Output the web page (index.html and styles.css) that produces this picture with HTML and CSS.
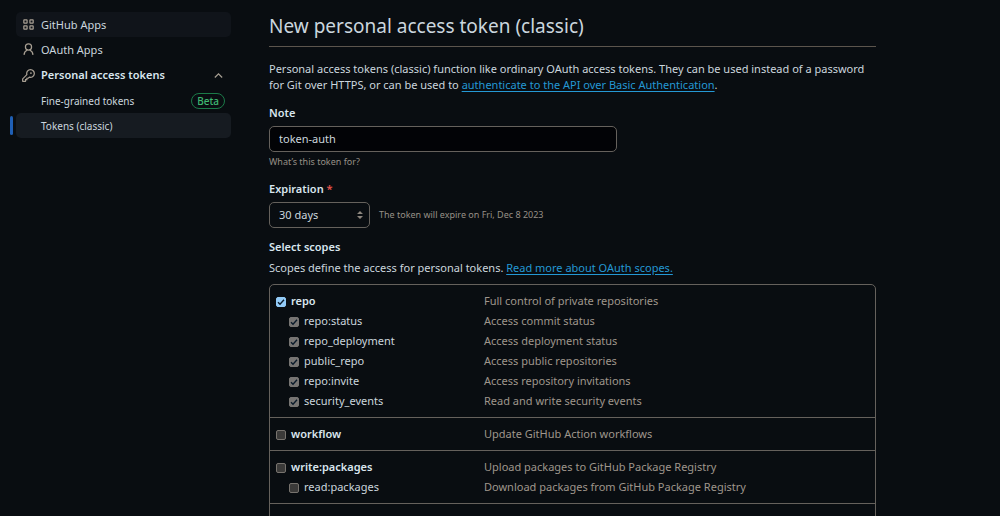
FILE: index.html
```html
<!DOCTYPE html>
<html lang="en">

<head>
    <meta charset="UTF-8">
    <meta name="viewport" content="width=device-width, initial-scale=1.0">
    <title>New personal access token (classic)</title>
    <link rel="stylesheet" href="styles.css">
</head>

<body>
    <div class="page">
        <nav class="sidebar" aria-label="Developer settings">
            <ul class="menu">
                <li>
                    <a class="menu-item hover" href="#">
                        <svg class="icon" viewBox="0 0 16 16"><rect x="2.25" y="2.25" width="4" height="4" rx=".5"/><rect x="9.75" y="2.25" width="4" height="4" rx=".5"/><rect x="2.25" y="9.75" width="4" height="4" rx=".5"/><rect x="9.75" y="9.75" width="4" height="4" rx=".5"/></svg>
                        GitHub Apps
                    </a>
                </li>
                <li>
                    <a class="menu-item" href="#">
                        <svg class="icon" viewBox="0 0 16 16"><circle cx="8" cy="5" r="3.8"/><path d="M2.5 14.6c.2-3 2-5 4-5.9M13.5 14.6c-.2-3-2-5-4-5.9"/></svg>
                        OAuth Apps
                    </a>
                </li>
                <li>
                    <button class="menu-item parent" type="button" aria-expanded="true">
                        <svg class="icon" viewBox="0 0 16 16"><path d="M10.5.8a4.7 4.7 0 1 1-1.4 9.2L7.7 11.4H6v1.8H4.4v1.6a.5.5 0 0 1-.5.5H1.3a.5.5 0 0 1-.5-.5v-2.6L6 6.9A4.7 4.7 0 0 1 10.5.8z"/><circle class="dot" cx="11" cy="5" r="1.1"/></svg>
                        Personal access tokens
                        <svg class="icon chevron" viewBox="0 0 16 16"><path d="M3.5 10.5L8 6l4.5 4.5"/></svg>
                    </button>
                    <ul class="submenu">
                        <li><a class="menu-item" href="#">Fine-grained tokens <span class="beta">Beta</span></a></li>
                        <li class="current"><a class="menu-item" href="#" aria-current="page">Tokens (classic)</a></li>
                    </ul>
                </li>
            </ul>
        </nav>

        <main class="content">
            <h1 class="title">New personal access token (classic)</h1>
            <p class="intro">Personal access tokens (classic) function like ordinary OAuth access tokens. They can be used instead of a password for Git over HTTPS, or can be used to <a href="#">authenticate to the API over Basic Authentication</a>.</p>

            <form>
                <div class="field">
                    <label class="field-label" for="note">Note</label>
                    <input class="text-input" id="note" type="text" value="token-auth" aria-describedby="note-hint">
                    <p class="hint" id="note-hint">What’s this token for?</p>
                </div>

                <div class="field">
                    <label class="field-label" for="expiration">Expiration <span class="required">*</span></label>
                    <div class="expiration">
                        <div class="select-wrap">
                            <select class="select" id="expiration">
                                <option>7 days</option>
                                <option selected>30 days</option>
                                <option>60 days</option>
                                <option>90 days</option>
                            </select>
                            <svg class="arrows" viewBox="0 0 6 8"><path d="M3 0l3 3H0zM3 8L0 5h6z"/></svg>
                        </div>
                        <span class="hint">The token will expire on Fri, Dec 8 2023</span>
                    </div>
                </div>

                <h2 class="field-label">Select scopes</h2>
                <p class="scopes-intro">Scopes define the access for personal tokens. <a href="#">Read more about OAuth scopes.</a></p>

                <div class="scopes">
                    <div class="group">
                        <div class="scope top">
                            <label><input type="checkbox" checked>repo</label>
                            <span class="desc">Full control of private repositories</span>
                        </div>
                        <div class="scope">
                            <label><input type="checkbox" checked disabled>repo:status</label>
                            <span class="desc">Access commit status</span>
                        </div>
                        <div class="scope">
                            <label><input type="checkbox" checked disabled>repo_deployment</label>
                            <span class="desc">Access deployment status</span>
                        </div>
                        <div class="scope">
                            <label><input type="checkbox" checked disabled>public_repo</label>
                            <span class="desc">Access public repositories</span>
                        </div>
                        <div class="scope">
                            <label><input type="checkbox" checked disabled>repo:invite</label>
                            <span class="desc">Access repository invitations</span>
                        </div>
                        <div class="scope">
                            <label><input type="checkbox" checked disabled>security_events</label>
                            <span class="desc">Read and write security events</span>
                        </div>
                    </div>
                    <div class="group">
                        <div class="scope top">
                            <label><input type="checkbox">workflow</label>
                            <span class="desc">Update GitHub Action workflows</span>
                        </div>
                    </div>
                    <div class="group">
                        <div class="scope top">
                            <label><input type="checkbox">write:packages</label>
                            <span class="desc">Upload packages to GitHub Package Registry</span>
                        </div>
                        <div class="scope">
                            <label><input type="checkbox">read:packages</label>
                            <span class="desc">Download packages from GitHub Package Registry</span>
                        </div>
                    </div>
                    <div class="group">
                        <div class="scope top">
                            <label><input type="checkbox">delete:packages</label>
                            <span class="desc">Delete packages from GitHub Package Registry</span>
                        </div>
                    </div>
                </div>
            </form>
        </main>
    </div>
</body>

</html>
```
FILE: styles.css
```css
* {
    box-sizing: border-box;
    padding: 0;
    margin: 0;
}

body {
    background: #090d11;
    color: #cbd6de;
    font: 11px/16px "Noto Sans", sans-serif;
}

input,
select,
button {
    font: inherit;
    color: inherit;
}

ul {
    list-style: none;
}

a {
    color: #2498d4;
    text-underline-offset: 2px;
}

.page {
    display: flex;
    gap: 38px;
    padding: 12px 124px 0 16px;
}

/* sidebar */
.sidebar {
    flex: 0 0 215px;
}

.menu-item {
    display: flex;
    align-items: center;
    gap: 6px;
    width: 100%;
    height: 25px;
    padding: 0 6px;
    border: 0;
    border-radius: 5px;
    background: none;
    color: #cbd6de;
    text-decoration: none;
}

.menu-item.hover {
    background: #10141a;
}

.menu-item.parent {
    height: 26px;
    font-weight: 600;
    color: #d9e6ee;
}

.submenu .menu-item {
    padding-left: 25px;
    font-size: 10px;
}

.icon {
    width: 13px;
    height: 13px;
    fill: none;
    stroke: #a89f93;
    stroke-width: 1.5;
}

.icon .dot {
    fill: #a89f93;
    stroke: none;
}

.chevron {
    margin-left: auto;
}

.beta {
    margin-left: auto;
    padding: 0 5px;
    border: 1px solid #1b7a48;
    border-radius: 8px;
    line-height: 14px;
    font-weight: 500;
    color: #3fb871;
}

.current {
    position: relative;
}

.current .menu-item {
    background: #161b21;
}

.current::before {
    content: "";
    position: absolute;
    left: -6px;
    top: 3px;
    bottom: 3px;
    width: 3px;
    border-radius: 2px;
    background: #1f5fb5;
}

/* main column */
.content {
    flex: 1;
    min-width: 0;
}

.title {
    padding-bottom: 6px;
    border-bottom: 1px solid #5c554d;
    font-size: 19px;
    line-height: 28px;
    font-weight: 400;
}

.intro {
    margin: 14px 0 12px;
}

.field {
    margin-bottom: 11px;
}

.field-label {
    display: block;
    font-size: 11px;
    font-weight: 600;
    color: #d9e6ee;
}

.required {
    color: #e5534b;
}

.text-input,
.select {
    display: block;
    width: 100%;
    height: 26px;
    padding: 0 9px 1px;
    border: 1px solid #65615c;
    border-radius: 5px;
}

.text-input {
    max-width: 348px;
    margin: 5px 0 2px;
    background: #020306;
}

.hint {
    font-size: 9px;
    color: #968f86;
}

.expiration {
    display: flex;
    align-items: center;
    gap: 9px;
    margin-top: 5px;
}

.select-wrap {
    position: relative;
    width: 101px;
}

.select {
    appearance: none;
    background: #090d11;
}

.arrows {
    position: absolute;
    right: 7px;
    top: 9px;
    width: 6px;
    height: 8px;
    fill: #8d867e;
    pointer-events: none;
}

.scopes-intro {
    margin: 5px 0 8px;
}

/* scopes table */
.scopes {
    border: 1px solid #65615c;
    border-radius: 5px;
}

.group {
    padding: 6px 0;
}

.group + .group {
    border-top: 1px solid #65615c;
}

.scope {
    display: flex;
    line-height: 20px;
}

.scope label {
    display: flex;
    align-items: center;
    gap: 5px;
    width: 214px;
    padding-left: 19px;
}

.scope.top label {
    padding-left: 6px;
    font-weight: 600;
    color: #d9e6ee;
}

.desc {
    color: #9f968c;
}

.scope input {
    appearance: none;
    width: 10px;
    height: 10px;
    margin-top: 2px;
    border: 1px solid #77736e;
    border-radius: 2px;
    background: #3b3a39;
}

.scope input:checked {
    border-color: #92caf6;
    background: #92caf6 url("data:image/svg+xml,%3Csvg xmlns='http://www.w3.org/2000/svg' viewBox='0 0 8 8'%3E%3Cpath d='M1 4.2l2 2L7 1.8' fill='none' stroke='%230a1a2a' stroke-width='1.4'/%3E%3C/svg%3E");
}

.scope input:checked:disabled {
    border-color: #777573;
    background-color: #777573;
}
```
